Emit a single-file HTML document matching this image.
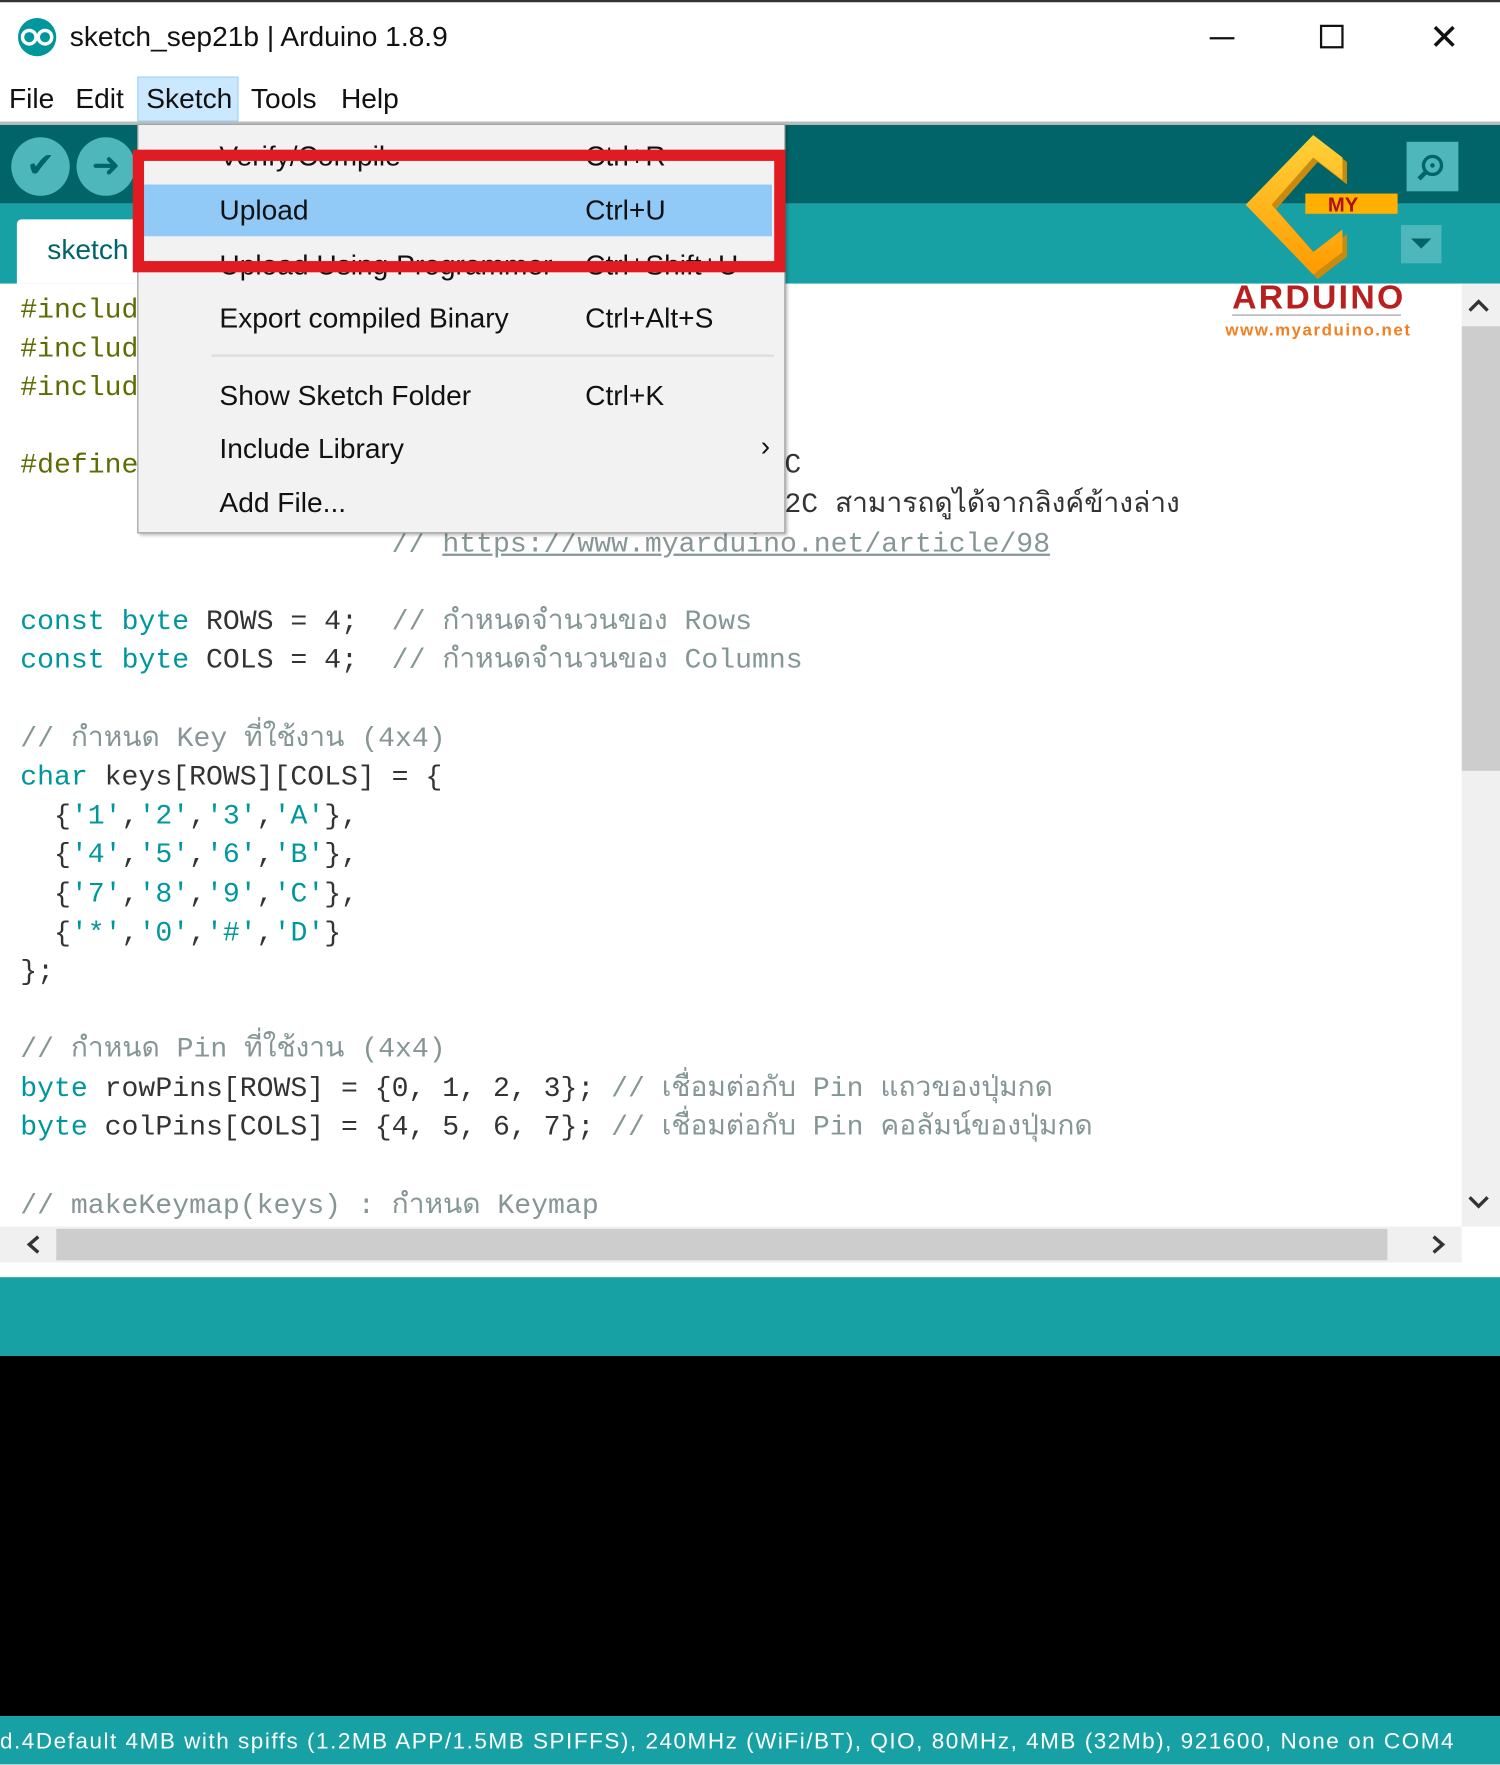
<!DOCTYPE html>
<html><head><meta charset="utf-8"><style>
*{margin:0;padding:0;box-sizing:border-box}
body{width:1500px;height:1765px;overflow:hidden;background:#fff}
#s{position:absolute;left:0;top:0;width:1333px;height:1568px;transform:scale(1.12528);transform-origin:0 0;overflow:hidden;font-family:"Liberation Sans",sans-serif}
.a{position:absolute}
.ui{font-family:"Liberation Sans","Noto Sans CJK SC",sans-serif;font-size:25px;color:#111;white-space:nowrap}
.code{position:absolute;left:18px;font-family:"Liberation Mono","Noto Sans CJK SC",monospace;font-size:25px;color:#333;white-space:pre;line-height:34.6px}
.k{color:#00979c}.c{color:#869596}.p{color:#5e6d03}
</style></head><body><div id="s">
<div class="a" style="left:0;top:0;width:1333px;height:2px;background:#333"></div>
<svg class="a" style="left:15px;top:15px" width="36" height="36"><circle cx="18" cy="18" r="17" fill="#00979c"/><circle cx="11" cy="18" r="6" fill="none" stroke="#fff" stroke-width="3"/><circle cx="25" cy="18" r="6" fill="none" stroke="#fff" stroke-width="3"/></svg>
<div class="a ui" style="left:62px;top:19px">sketch_sep21b | Arduino 1.8.9</div>
<div class="a" style="left:1075px;top:33px;width:22px;height:2px;background:#111"></div>
<div class="a" style="left:1173px;top:22px;width:21px;height:21px;border:2px solid #111"></div>
<div class="a ui" style="left:1270px;top:14px;font-size:32px">✕</div>
<div class="a" style="left:122px;top:68px;width:90px;height:40px;background:#cce8ff;border:1px solid #99d1ff"></div>
<div class="a ui" style="left:8px;top:74px">File</div>
<div class="a ui" style="left:67px;top:74px">Edit</div>
<div class="a ui" style="left:130px;top:74px">Sketch</div>
<div class="a ui" style="left:223px;top:74px">Tools</div>
<div class="a ui" style="left:303px;top:74px">Help</div>
<div class="a" style="left:0;top:108px;width:1333px;height:3px;background:#bbb"></div>
<div class="a" style="left:0;top:111px;width:1333px;height:70px;background:#006468"></div>
<div class="a" style="left:10px;top:122px;width:52px;height:52px;border-radius:50%;background:#4db7bb;color:#006468;font-size:30px;text-align:center;line-height:52px">✔</div>
<div class="a" style="left:68px;top:122px;width:52px;height:52px;border-radius:50%;background:#4db7bb;color:#006468;font-size:30px;text-align:center;line-height:52px">➜</div>
<div class="a" style="left:1250px;top:126px;width:46px;height:44px;background:#4db7bb"></div>
<svg class="a" style="left:1250px;top:126px" width="46" height="44"><circle cx="23" cy="21" r="8" fill="none" stroke="#006468" stroke-width="3"/><circle cx="23" cy="21" r="2" fill="#006468"/><path d="M17 27 L11 33" stroke="#006468" stroke-width="4"/></svg>
<div class="a" style="left:0;top:181px;width:1333px;height:71px;background:#17a1a5"></div>
<div class="a" style="left:15px;top:195px;width:120px;height:57px;background:#fff;border-radius:4px 4px 0 0"></div>
<div class="a ui" style="left:42px;top:208px;color:#006468">sketch</div>
<div class="a" style="left:1245px;top:200px;width:36px;height:34px;background:#4db7bb"></div>
<div class="a" style="left:1254px;top:212px;border-left:9px solid transparent;border-right:9px solid transparent;border-top:9px solid #006468"></div>
<!-- code -->
<div class="code" style="top:259px"><span class="p">#include</span>
<span class="p">#include</span>
<span class="p">#include</span>

<span class="p">#define</span>

                      <span class="c">// <u>https://www.myarduino.net/article/98</u></span>

<span class="k">const</span> <span class="k">byte</span> ROWS = 4;  <span class="c">// กำหนดจำนวนของ Rows</span>
<span class="k">const</span> <span class="k">byte</span> COLS = 4;  <span class="c">// กำหนดจำนวนของ Columns</span>

<span class="c">// กำหนด Key ที่ใช้งาน (4x4)</span>
<span class="k">char</span> keys[ROWS][COLS] = {
  {<span class="k">'1'</span>,<span class="k">'2'</span>,<span class="k">'3'</span>,<span class="k">'A'</span>},
  {<span class="k">'4'</span>,<span class="k">'5'</span>,<span class="k">'6'</span>,<span class="k">'B'</span>},
  {<span class="k">'7'</span>,<span class="k">'8'</span>,<span class="k">'9'</span>,<span class="k">'C'</span>},
  {<span class="k">'*'</span>,<span class="k">'0'</span>,<span class="k">'#'</span>,<span class="k">'D'</span>}
};

<span class="c">// กำหนด Pin ที่ใช้งาน (4x4)</span>
<span class="k">byte</span> rowPins[ROWS] = {0, 1, 2, 3}; <span class="c">// เชื่อมต่อกับ Pin แถวของปุ่มกด</span>
<span class="k">byte</span> colPins[COLS] = {4, 5, 6, 7}; <span class="c">// เชื่อมต่อกับ Pin คอลัมน์ของปุ่มกด</span>

<span class="c">// makeKeymap(keys) : กำหนด Keymap</span></div>
<div class="code" style="top:397px;left:697px">C
2C สามารถดูได้จากลิงค์ข้างล่าง</div>
<!-- scrollbars -->
<div class="a" style="left:1299px;top:252px;width:34px;height:838px;background:#f0f0f0"></div>
<div class="a" style="left:1299px;top:290px;width:34px;height:395px;background:#cdcdcd"></div>
<svg class="a" style="left:1303px;top:262px" width="22" height="20"><path d="M3 14 L11 6 L19 14" fill="none" stroke="#333" stroke-width="3"/></svg>
<svg class="a" style="left:1303px;top:1058px" width="22" height="20"><path d="M3 6 L11 14 L19 6" fill="none" stroke="#333" stroke-width="3"/></svg>
<div class="a" style="left:0;top:1090px;width:1299px;height:32px;background:#f0f0f0"></div>
<div class="a" style="left:50px;top:1092px;width:1183px;height:28px;background:#cdcdcd"></div>
<svg class="a" style="left:20px;top:1096px" width="20" height="20"><path d="M14 3 L6 10 L14 17" fill="none" stroke="#333" stroke-width="3"/></svg>
<svg class="a" style="left:1268px;top:1096px" width="20" height="20"><path d="M6 3 L14 10 L6 17" fill="none" stroke="#333" stroke-width="3"/></svg>
<div class="a" style="left:0;top:1135px;width:1333px;height:70px;background:#17a1a5"></div>
<div class="a" style="left:0;top:1205px;width:1333px;height:320px;background:#000"></div>
<div class="a" style="left:0;top:1525px;width:1333px;height:43px;background:#17a1a5"></div>
<div class="a ui" style="left:0;top:1537px;font-size:20px;color:#fff;letter-spacing:1.35px">d.4Default 4MB with spiffs (1.2MB APP/1.5MB SPIFFS), 240MHz (WiFi/BT), QIO, 80MHz, 4MB (32Mb), 921600, None on COM4</div>
<!-- logo -->
<svg class="a" style="left:1085px;top:112px" width="180" height="195">
<defs><linearGradient id="g" x1="0" y1="0" x2="0" y2="1"><stop offset="0" stop-color="#ffd23a"/><stop offset="1" stop-color="#ff9a00"/></linearGradient></defs>
<path d="M82 8 L108 28 L108 48 L82 28 L45 70 L82 112 L108 92 L108 112 L82 132 L22 70 Z" fill="#c98a10" transform="translate(4,4)"/>
<path d="M82 8 L108 28 L108 48 L82 28 L45 70 L82 112 L108 92 L108 112 L82 132 L22 70 Z" fill="url(#g)"/>
<rect x="75" y="60" width="82" height="18" fill="#ffb000"/>
<text x="95" y="76" font-family="Liberation Sans" font-weight="bold" font-size="18" fill="#b01010">MY</text>
<text x="10" y="162" font-family="Liberation Sans" font-weight="bold" font-size="30" fill="#b82020" textLength="152">ARDUINO</text>
<line x1="10" y1="168" x2="160" y2="168" stroke="#999"/>
<text x="4" y="186" font-family="Liberation Sans" font-weight="bold" font-size="15" fill="#f08020" textLength="164">www.myarduino.net</text>
</svg>
<!-- menu -->
<div class="a" style="left:122px;top:110px;width:576px;height:364px;background:#f2f2f2;border:1px solid #999;box-shadow:2px 2px 3px rgba(0,0,0,.3)"></div>
<div class="a ui" style="left:195px;top:125px">Verify/Compile</div>
<div class="a ui" style="left:520px;top:125px">Ctrl+R</div>
<div class="a" style="left:128px;top:164px;width:558px;height:46px;background:#91c9f7"></div>
<div class="a ui" style="left:195px;top:173px">Upload</div>
<div class="a ui" style="left:520px;top:173px">Ctrl+U</div>
<div class="a ui" style="left:195px;top:222px">Upload Using Programmer</div>
<div class="a ui" style="left:520px;top:222px">Ctrl+Shift+U</div>
<div class="a ui" style="left:195px;top:269px">Export compiled Binary</div>
<div class="a ui" style="left:520px;top:269px">Ctrl+Alt+S</div>
<div class="a" style="left:188px;top:315px;width:500px;height:2px;background:#ddd"></div>
<div class="a ui" style="left:195px;top:338px">Show Sketch Folder</div>
<div class="a ui" style="left:520px;top:338px">Ctrl+K</div>
<div class="a ui" style="left:195px;top:385px">Include Library</div>
<div class="a ui" style="left:676px;top:383px">›</div>
<div class="a ui" style="left:195px;top:433px">Add File...</div>
<div class="a" style="left:118px;top:133px;width:580px;height:109px;border:10px solid #e01b22"></div>
</div></body></html>
